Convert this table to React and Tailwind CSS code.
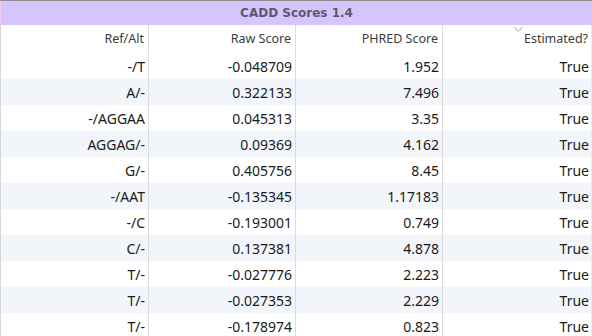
import React from "react";

const rows = [
  ["-/T", "-0.048709", "1.952", "True"],
  ["A/-", "0.322133", "7.496", "True"],
  ["-/AGGAA", "0.045313", "3.35", "True"],
  ["AGGAG/-", "0.09369", "4.162", "True"],
  ["G/-", "0.405756", "8.45", "True"],
  ["-/AAT", "-0.135345", "1.17183", "True"],
  ["-/C", "-0.193001", "0.749", "True"],
  ["C/-", "0.137381", "4.878", "True"],
  ["T/-", "-0.027776", "2.223", "True"],
  ["T/-", "-0.027353", "2.229", "True"],
  ["T/-", "-0.178974", "0.823", "True"],
];

const cols = "grid grid-cols-[148px_147px_147px_149px]";

export default function App() {
  return (
    <div className="w-[592px] h-[336px] overflow-hidden bg-white font-['Noto_Sans',sans-serif] border-t border-[#8c8c8c]">
      <div className="h-[24px] bg-[#d5c5fc] border-l border-[#f6c9ec] flex items-center justify-center">
        <span className="font-['DejaVu_Sans',sans-serif] font-bold text-[12px] text-[#5c5870]">
          CADD Scores 1.4
        </span>
      </div>
      <div className="border-l border-[#d6d6d6] border-r border-r-[#e6ecf5]">
        <div className={cols + " h-[28px]"}>
          {["Ref/Alt", "Raw Score", "PHRED Score", "Estimated?"].map((h, i) => (
            <div
              key={h}
              className={
                "relative flex items-center justify-end pr-[4px] text-[12.5px] text-[#3c3c3c] " +
                (i < 3 ? "border-r border-[#dcdcdc]" : "")
              }
            >
              {i === 3 && (
                <svg className="absolute left-[71px] top-[2px]" width="9" height="5" viewBox="0 0 9 5">
                  <path d="M0.5 0.5 L4.5 4 L8.5 0.5" fill="none" stroke="#9a9a9a" strokeWidth="1" />
                </svg>
              )}
              {h}
            </div>
          ))}
        </div>
        {rows.map((r, ri) => (
          <div key={ri} className={cols + " h-[26px] " + (ri % 2 === 1 ? "bg-[#f2f5fa]" : "bg-white")}>
            {r.map((c, ci) => (
              <div
                key={ci}
                className={
                  "flex items-center justify-end pr-[3px] text-[14px] text-[#1a1a1a] " +
                  (ci < 3 ? "border-r border-[#dcdcdc]" : "")
                }
              >
                {c}
              </div>
            ))}
          </div>
        ))}
      </div>
    </div>
  );
}
